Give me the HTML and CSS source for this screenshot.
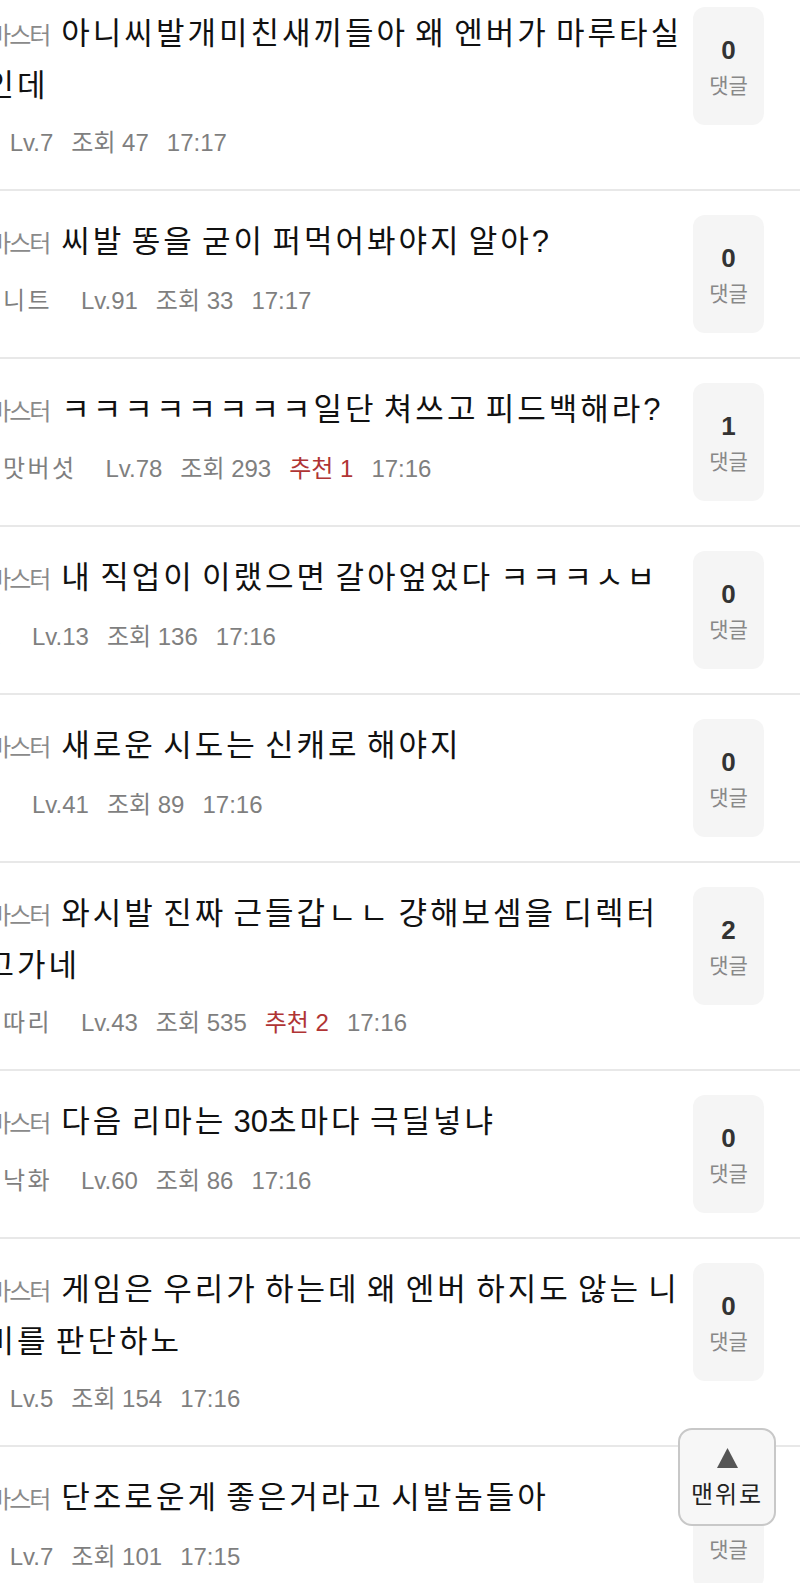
FILE: index.html
```html
<!DOCTYPE html>
<html lang="ko">
<head>
<meta charset="utf-8">
<title>리마스터 게시판</title>
<link rel="stylesheet" href="styles.css">
</head>
<body>
<ul class="post-list">
  <li class="post">
    <div class="post-body">
      <p class="post-title"><span class="cat">리마스터</span>아니씨발개미친새끼들아 왜 엔버가 마루타실험인데</p>
      <div class="meta"><span class="author latin">Lu</span><span>Lv.7</span><span>조회 47</span><span>17:17</span></div>
    </div>
    <div class="cmt"><span class="cmt-num">0</span><span class="cmt-label">댓글</span></div>
  </li>
  <li class="post">
    <div class="post-body">
      <p class="post-title"><span class="cat">리마스터</span>씨발 똥을 굳이 퍼먹어봐야지 알아?</p>
      <div class="meta"><span class="author">아미니트</span><span>Lv.91</span><span>조회 33</span><span>17:17</span></div>
    </div>
    <div class="cmt"><span class="cmt-num">0</span><span class="cmt-label">댓글</span></div>
  </li>
  <li class="post">
    <div class="post-body">
      <p class="post-title"><span class="cat">리마스터</span>ㅋㅋㅋㅋㅋㅋㅋㅋ일단 쳐쓰고 피드백해라?</p>
      <div class="meta"><span class="author">독이맛버섯</span><span>Lv.78</span><span>조회 293</span><span class="rec">추천 1</span><span>17:16</span></div>
    </div>
    <div class="cmt"><span class="cmt-num">1</span><span class="cmt-label">댓글</span></div>
  </li>
  <li class="post">
    <div class="post-body">
      <p class="post-title"><span class="cat">리마스터</span>내 직업이 이랬으면 갈아엎었다 ㅋㅋㅋㅅㅂ</p>
      <div class="meta"><span class="author">해토</span><span>Lv.13</span><span>조회 136</span><span>17:16</span></div>
    </div>
    <div class="cmt"><span class="cmt-num">0</span><span class="cmt-label">댓글</span></div>
  </li>
  <li class="post">
    <div class="post-body">
      <p class="post-title"><span class="cat">리마스터</span>새로운 시도는 신캐로 해야지</p>
      <div class="meta"><span class="author">가로</span><span>Lv.41</span><span>조회 89</span><span>17:16</span></div>
    </div>
    <div class="cmt"><span class="cmt-num">0</span><span class="cmt-label">댓글</span></div>
  </li>
  <li class="post">
    <div class="post-body">
      <p class="post-title"><span class="cat">리마스터</span>와시발 진짜 근들갑ㄴㄴ 걍해보셈을 디렉터 먹고가네</p>
      <div class="meta"><span class="author">아빈따리</span><span>Lv.43</span><span>조회 535</span><span class="rec">추천 2</span><span>17:16</span></div>
    </div>
    <div class="cmt"><span class="cmt-num">2</span><span class="cmt-label">댓글</span></div>
  </li>
  <li class="post">
    <div class="post-body">
      <p class="post-title"><span class="cat">리마스터</span>다음 리마는 <span class="num">30</span>초마다 극딜넣냐</p>
      <div class="meta"><span class="author">주연낙화</span><span>Lv.60</span><span>조회 86</span><span>17:16</span></div>
    </div>
    <div class="cmt"><span class="cmt-num">0</span><span class="cmt-label">댓글</span></div>
  </li>
  <li class="post">
    <div class="post-body">
      <p class="post-title"><span class="cat">리마스터</span>게임은 우리가 하는데 왜 엔버 하지도 않는 니 재미를 판단하노</p>
      <div class="meta"><span class="author latin">Lu</span><span>Lv.5</span><span>조회 154</span><span>17:16</span></div>
    </div>
    <div class="cmt"><span class="cmt-num">0</span><span class="cmt-label">댓글</span></div>
  </li>
  <li class="post">
    <div class="post-body">
      <p class="post-title"><span class="cat">리마스터</span>단조로운게 좋은거라고 시발놈들아</p>
      <div class="meta"><span class="author latin">Lu</span><span>Lv.7</span><span>조회 101</span><span>17:15</span></div>
    </div>
    <div class="cmt"><span class="cmt-num">0</span><span class="cmt-label">댓글</span></div>
  </li>
</ul>
<a class="to-top" href="#">
  <svg class="to-top-arrow" width="21" height="20" viewBox="0 0 21 20" aria-hidden="true"><polygon points="10.5,0 21,20 0,20" fill="#555"/></svg>
  <span class="to-top-label">맨위로</span>
</a>
</body>
</html>
```

FILE: styles.css
```css
html, body {
  margin: 0;
  padding: 0;
  background: #fff;
}
body {
  font-family: "Liberation Sans", "Noto Sans CJK KR", sans-serif;
  color: #111;
  overflow-x: hidden;
}
.post-list {
  list-style: none;
  margin: -17px 0 0 -46px;
  padding: 0;
}
.post {
  display: flex;
  align-items: flex-start;
  border-bottom: 2px solid #e8e8e8;
}
.post-body {
  flex: 1;
  min-width: 0;
  padding: 26px 0 31px;
}
.post-title {
  margin: 0;
  font-size: 31px;
  line-height: 50px;
  letter-spacing: 3px;
  word-spacing: -4.3px;
  color: #111;
}
.post-title .num {
  letter-spacing: 0;
}
.cat {
  display: inline-block;
  margin-left: 15px;
  margin-right: 12px;
  font-size: 24px;
  letter-spacing: -2px;
  color: #8a8a8a;
}
.meta {
  display: flex;
  margin-top: 17px;
  font-size: 24px;
  line-height: 30px;
  color: #7f7f7f;
  white-space: nowrap;
}
.meta span {
  margin-right: 18px;
}
.meta .author {
  letter-spacing: 2.4px;
  margin-right: 29px;
}
.meta .author.latin {
  letter-spacing: 0;
}
.meta .rec {
  color: #b03434;
}
.cmt {
  flex: none;
  box-sizing: border-box;
  width: 71px;
  height: 118px;
  margin: 24px 36px 24px 8px;
  padding-top: 28px;
  border-radius: 12px;
  background: #f5f5f5;
  display: flex;
  flex-direction: column;
  align-items: center;
}
.cmt-num {
  font-size: 26px;
  line-height: 30px;
  font-weight: bold;
  color: #333;
}
.cmt-label {
  margin-top: 8px;
  font-size: 21px;
  line-height: 26px;
  color: #888;
}
.to-top {
  position: fixed;
  right: 24px;
  bottom: 57px;
  box-sizing: border-box;
  width: 98px;
  height: 98px;
  padding-top: 18px;
  border: 2px solid #c8c8c8;
  border-radius: 14px;
  background: #f7f7f7;
  display: flex;
  flex-direction: column;
  align-items: center;
  text-decoration: none;
}
.to-top-arrow {
  display: block;
}
.to-top-label {
  margin-top: 13px;
  font-size: 24px;
  line-height: 28px;
  letter-spacing: 2px;
  color: #222;
}
```
